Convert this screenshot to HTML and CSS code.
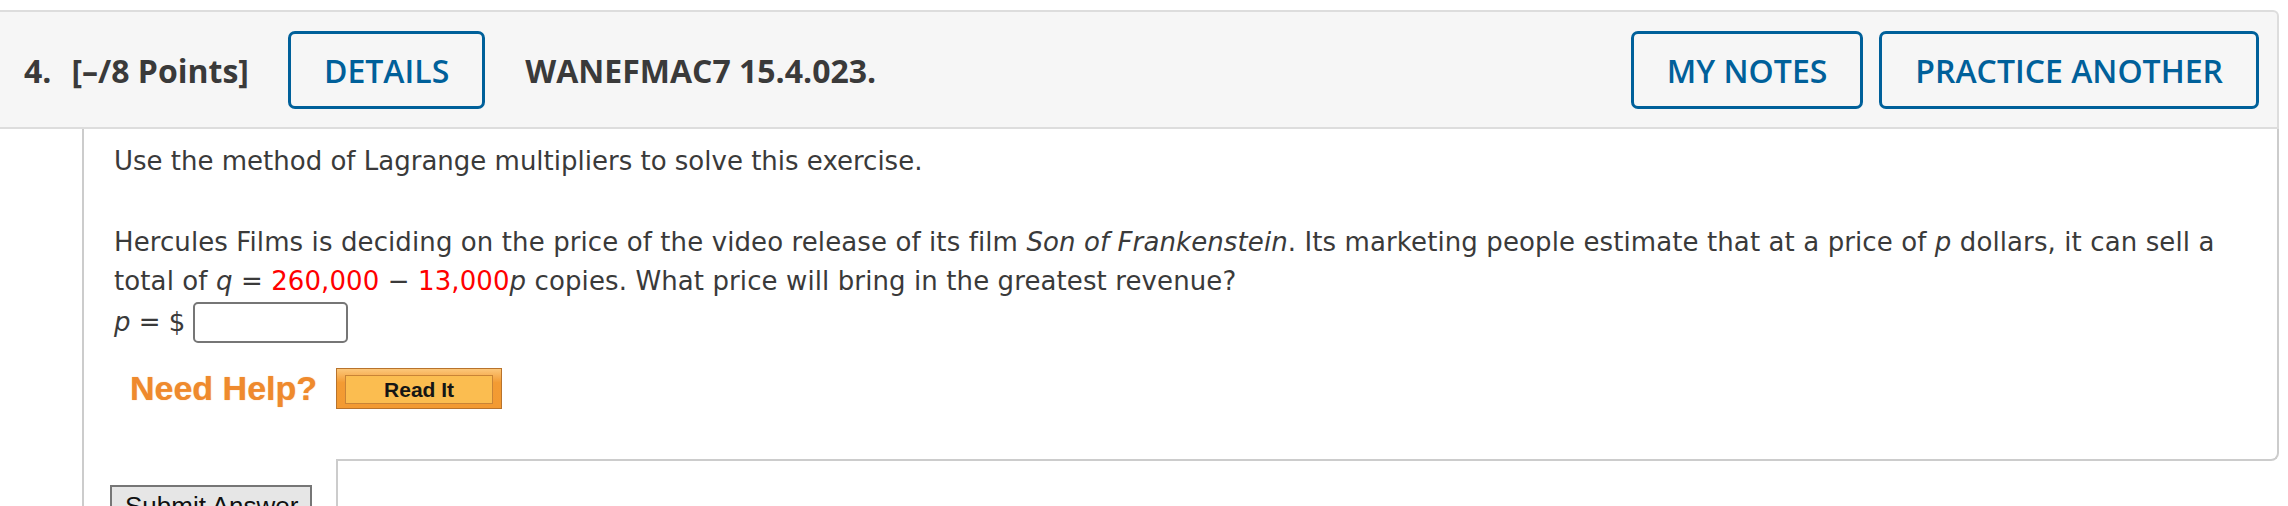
FILE: index.html
```html
<!DOCTYPE html>
<html>
<head>
<meta charset="utf-8">
<title>Question 4</title>
<link rel="stylesheet" href="styles.css">
</head>
<body>
<div class="question">
  <div class="q-header">
    <div class="q-title"><span class="q-num">4.</span><span class="q-points">[–/8 Points]</span></div>
    <button class="btn btn-details">DETAILS</button>
    <div class="q-code">WANEFMAC7 15.4.023.</div>
    <div class="spacer"></div>
    <button class="btn">MY NOTES</button>
    <button class="btn">PRACTICE ANOTHER</button>
  </div>
  <div class="q-frame">
    <div class="q-body">
      <p class="intro">Use the method of Lagrange multipliers to solve this exercise.</p>
      <p class="problem">Hercules Films is deciding on the price of the video release of its film <i>Son of Frankenstein</i>. Its marketing people estimate that at a price of <i>p</i> dollars, it can sell a<br>total of <i>q</i> = <span class="red">260,000</span> − <span class="red">13,000</span><i>p</i> copies. What price will bring in the greatest revenue?</p>
      <div class="answer"><span><i>p</i> = $</span><input class="answer-box" type="text"></div>
      <div class="help"><span class="need">Need Help?</span><span class="readit"><span class="readit-inner">Read It</span></span></div>
    </div>
    <div class="q-foot">
      <div class="submit-col"><button class="submit">Submit Answer</button></div>
      <div class="response"></div>
    </div>
  </div>
</div>
</body>
</html>
```
FILE: styles.css
```css
html, body {
  margin: 0;
  padding: 0;
  background: #fff;
  overflow: hidden;
}
body {
  font-family: "DejaVu Sans", Verdana, sans-serif;
  color: #3a3a3a;
}
.question {
  margin: 10px 9px 0 0;
}
.q-header {
  display: flex;
  align-items: center;
  height: 78px;
  padding: 19px 18px 18px 24px;
  background: #f6f6f6;
  border: 2px solid #dddddd;
  border-left: none;
  border-top-right-radius: 6px;
  font-family: "Open Sans", sans-serif;
  color: #3a3a3a;
}
.q-title {
  font-weight: 700;
  font-size: 32px;
  white-space: nowrap;
}
.q-num {
  margin-right: 20px;
}
.btn {
  height: 78px;
  box-sizing: border-box;
  border: 3px solid #00609a;
  border-radius: 7px;
  background: transparent;
  color: #00609a;
  font-family: "Open Sans", sans-serif;
  font-weight: 600;
  font-size: 32px;
  padding: 0 33px;
  white-space: nowrap;
}
.btn + .btn {
  margin-left: 16px;
}
.btn-details {
  margin-left: 39px;
}
.q-code {
  margin-left: 40px;
  font-weight: 700;
  font-size: 32px;
  white-space: nowrap;
}
.spacer {
  flex: 1;
}
.q-frame {
  margin-left: 82px;
  border-left: 2px solid #cccccc;
}
.q-body {
  padding: 13px 0 50px 30px;
  border-right: 2px solid #cccccc;
  border-bottom: 2px solid #cccccc;
  border-bottom-right-radius: 8px;
  font-size: 26px;
  line-height: 39px;
}
.q-body p {
  margin: 0;
}
.problem {
  letter-spacing: 0.1px;
}
.intro {
  margin-bottom: 42px !important;
}
.red {
  color: #ff0000;
}
.answer {
  display: flex;
  align-items: center;
  gap: 8px;
  margin-top: 1px;
}
.answer-box {
  width: 155px;
  height: 41px;
  box-sizing: border-box;
  border: 2px solid #767676;
  border-radius: 5px;
  background: #fff;
}
.help {
  display: flex;
  align-items: center;
  margin-top: 25px;
  padding-left: 16px;
}
.need {
  font-family: "Liberation Sans", Arial, sans-serif;
  font-weight: 700;
  font-size: 34px;
  color: #ef8a2d;
  text-shadow: 0 0 1px rgba(239, 138, 45, 0.7);
}
.readit {
  display: flex;
  width: 166px;
  height: 41px;
  box-sizing: border-box;
  margin-left: 19px;
  padding: 6px 8px 4px;
  border: 1px solid #b8732c;
  background: linear-gradient(#fcc77a, #f39b33 35%, #f39a32);
}
.readit-inner {
  flex: 1;
  display: flex;
  align-items: center;
  justify-content: center;
  border: 1px solid #c98436;
  background: #fbbd50;
  font-family: "Liberation Sans", Arial, sans-serif;
  font-weight: 700;
  font-size: 21px;
  color: #151515;
}
.q-foot {
  display: flex;
  margin-top: -2px;
}
.submit-col {
  width: 252px;
  background: #fff;
  padding: 26px 0 0 26px;
  box-sizing: border-box;
}
.submit {
  height: 42px;
  border: 2px solid #767676;
  background: #e6e6e6;
  font-family: "Liberation Sans", Arial, sans-serif;
  font-size: 26px;
  color: #111;
  padding: 0 12px 0 13px;
  white-space: nowrap;
}
.response {
  flex: 1;
  height: 80px;
  border-left: 2px solid #cccccc;
}
```
